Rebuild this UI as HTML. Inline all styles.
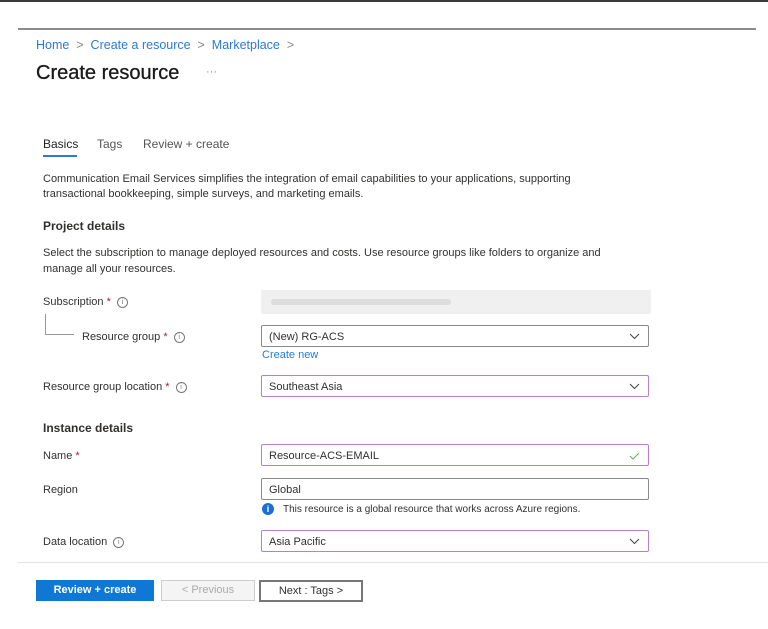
<!DOCTYPE html>
<html><head><style>
body{margin:0;width:768px;height:629px;background:#fff;font-family:"Liberation Sans",sans-serif;color:#323130;position:relative;overflow:hidden}
.a{position:absolute;white-space:nowrap}
.s{font-size:11px}
.bl{color:#2a7ad6}
.in{position:absolute;left:261px;width:379px;height:20px;border:1px solid #8a8886;border-radius:2px;font-size:11px;line-height:22px;padding-left:7px;box-sizing:content-box}
.pu{border-color:#b77fd1}
.chev{position:absolute;right:8px;top:7px}
.req{color:#a4262c}
.i{display:inline-block;width:9px;height:9px;border:1px solid #777;border-radius:50%;font-size:7px;line-height:9px;text-align:center;color:#777;vertical-align:middle;margin-left:6px}
</style></head><body>
<div class="a" style="left:0;top:0;width:768px;height:2px;background:#3a3a3a"></div>
<div class="a" style="left:18px;top:28px;width:738px;height:2px;background:#8c8c8c"></div>
<div class="a bl" style="left:36px;top:38px;font-size:12.5px">Home <span style="color:#888">&nbsp;&gt;&nbsp;</span> Create a resource <span style="color:#888">&nbsp;&gt;&nbsp;</span> Marketplace <span style="color:#888">&nbsp;&gt;</span></div>
<div class="a" style="left:36px;top:62px;font-size:20px;color:#1a1a1a;-webkit-text-stroke:0.3px #1a1a1a">Create resource</div>
<div class="a" style="left:206px;top:66px;font-size:11px;color:#888">···</div>
<div class="a" style="left:43px;top:137px;font-size:12px;color:#222">Basics</div>
<div class="a" style="left:43px;top:155px;width:34px;height:2px;background:#2a7ad6"></div>
<div class="a" style="left:97px;top:137px;font-size:12px;color:#555">Tags</div>
<div class="a" style="left:143px;top:137px;font-size:12px;color:#555">Review + create</div>
<div class="a s" style="left:43px;top:172px;line-height:15px">Communication Email Services simplifies the integration of email capabilities to your applications, supporting<br>transactional bookkeeping, simple surveys, and marketing emails.</div>
<div class="a" style="left:43px;top:219px;font-size:12px;font-weight:bold">Project details</div>
<div class="a s" style="left:43px;top:245px;line-height:16px">Select the subscription to manage deployed resources and costs. Use resource groups like folders to organize and<br>manage all your resources.</div>
<div class="a s" style="left:43px;top:296px">Subscription <span class="req">*</span><span class="i">i</span></div>
<div class="a" style="left:261px;top:290px;width:390px;height:24px;background:#f0f0f0"><div style="margin:9px 10px;width:180px;height:6px;background:#ddd;border-radius:3px"></div></div>
<div class="a" style="left:45px;top:314px;width:28px;height:20px;border-left:1px solid #999;border-bottom:1px solid #999"></div>
<div class="a s" style="left:82px;top:331px">Resource group <span class="req">*</span><span class="i">i</span></div>
<div class="in" style="top:325px">(New) RG-ACS<svg class="chev" width="11" height="7" viewBox="0 0 11 7"><path d="M1 1l4.5 4.5L10 1" stroke="#444" fill="none"/></svg></div>
<div class="a s bl" style="left:262px;top:349px">Create new</div>
<div class="a s" style="left:43px;top:381px">Resource group location <span class="req">*</span><span class="i">i</span></div>
<div class="in pu" style="top:375px">Southeast Asia<svg class="chev" width="11" height="7" viewBox="0 0 11 7"><path d="M1 1l4.5 4.5L10 1" stroke="#444" fill="none"/></svg></div>
<div class="a" style="left:43px;top:421px;font-size:12px;font-weight:bold">Instance details</div>
<div class="a s" style="left:43px;top:450px">Name <span class="req">*</span></div>
<div class="in pu" style="top:444px">Resource-ACS-EMAIL<svg class="chev" width="11" height="8" viewBox="0 0 11 8"><path d="M1 4l3 3L10 1" stroke="#5fb85a" fill="none"/></svg></div>
<div class="a s" style="left:43px;top:484px">Region</div>
<div class="in" style="top:478px">Global</div>
<div class="a" style="left:262px;top:503px;width:12px;height:12px;border-radius:50%;background:#1a6fd0;color:#fff;font-size:9px;font-weight:bold;text-align:center;line-height:12px">i</div>
<div class="a" style="left:283px;top:504px;font-size:10px">This resource is a global resource that works across Azure regions.</div>
<div class="a s" style="left:43px;top:536px">Data location<span class="i">i</span></div>
<div class="in pu" style="top:530px">Asia Pacific<svg class="chev" width="11" height="7" viewBox="0 0 11 7"><path d="M1 1l4.5 4.5L10 1" stroke="#444" fill="none"/></svg></div>
<div class="a" style="left:18px;top:562px;width:750px;height:1px;background:#e1e1e1"></div>
<div class="a" style="left:36px;top:580px;width:118px;height:21px;background:#0f78d4;color:#fff;font-size:11px;font-weight:bold;text-align:center;line-height:21px">Review + create</div>
<div class="a" style="left:161px;top:580px;width:92px;height:19px;border:1px solid #ccc;background:#f4f4f4;color:#aaa;font-size:11px;text-align:center;line-height:19px">&lt; Previous</div>
<div class="a" style="left:259px;top:580px;width:100px;height:18px;border:2px solid #777;background:#fff;font-size:11px;text-align:center;line-height:18px">Next : Tags &gt;</div>
</body></html>
